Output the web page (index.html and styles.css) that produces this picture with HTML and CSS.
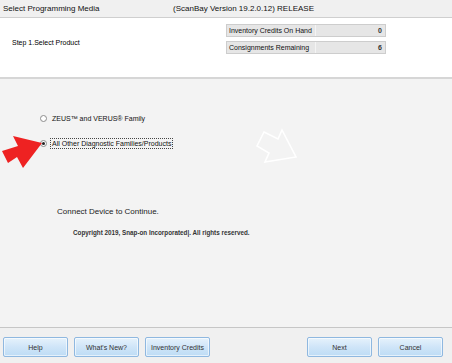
FILE: index.html
```html
<!DOCTYPE html>
<html>
<head>
<meta charset="utf-8">
<link rel="stylesheet" href="styles.css">
</head>
<body>
<div class="window">
  <div class="titlebar">
    <span class="title">Select Programming Media</span>
    <span class="version">(ScanBay Version 19.2.0.12) RELEASE</span>
  </div>
  <div class="header">
    <div class="step">Step 1.Select Product</div>
    <div class="stats">
      <div class="stat"><span class="stat-label">Inventory Credits On Hand</span><span class="stat-value">0</span></div>
      <div class="stat"><span class="stat-label">Consignments Remaining</span><span class="stat-value">6</span></div>
    </div>
  </div>
  <div class="main">
    <div class="radios">
      <label class="radio"><span class="dot"></span><span class="radio-text">ZEUS™ and VERUS® Family</span></label>
      <label class="radio"><span class="dot checked"></span><span class="radio-text focused">All Other Diagnostic Families/Products</span></label>
    </div>
    <div class="connect">Connect Device to Continue.</div>
    <div class="copyright">Copyright 2019, Snap-on Incorporated|. All rights reserved.</div>
    <svg class="overlay" width="452" height="250" viewBox="0 79 452 250">
      <polygon points="42,143 13,136 18,146 2,151 8,163 17,157 23,168" fill="#ee2222"/>
      <polygon points="264,132 278,139 282,130 296,157 265,162 269,153 257,146" fill="none" stroke="#ffffff" stroke-width="1.6" stroke-linejoin="miter"/>
    </svg>
  </div>
  <div class="footer">
    <div class="btn-group">
      <button class="btn">Help</button>
      <button class="btn">What's New?</button>
      <button class="btn">Inventory Credits</button>
    </div>
    <div class="btn-group">
      <button class="btn">Next</button>
      <button class="btn">Cancel</button>
    </div>
  </div>
</div>
</body>
</html>
```
FILE: styles.css
```css
* { box-sizing: border-box; }
html, body { margin: 0; padding: 0; }
body {
  width: 452px;
  height: 363px;
  overflow: hidden;
  font-family: "Liberation Sans", Arial, sans-serif;
  color: #1a1a1a;
  background: #f0f0f0;
}
.window {
  display: flex;
  flex-direction: column;
  width: 452px;
  height: 363px;
}
.titlebar {
  height: 18px;
  display: flex;
  align-items: center;
  background: #f0f0f0;
  border-bottom: 1px solid #cfcfcf;
  font-size: 8px;
  color: #111;
  padding-left: 3px;
}
.title { width: 170px; }
.header {
  height: 61px;
  background: #ffffff;
  border-bottom: 2px solid #d6d6d6;
  display: flex;
  padding-top: 6px;
}
.step {
  width: 226px;
  padding-left: 12px;
  padding-top: 15px;
  font-size: 7px;
  color: #000;
}
.stats {
  width: 160px;
  display: flex;
  flex-direction: column;
  gap: 4px;
}
.stat {
  height: 13px;
  display: flex;
  align-items: center;
  justify-content: space-between;
  background: #e6e6e6;
  border: 1px solid #cdcdcd;
  font-size: 7px;
  color: #111;
  white-space: nowrap;
}
.stat-label {
  width: 89px;
  height: 100%;
  display: flex;
  align-items: center;
  padding-left: 2px;
  border-right: 1px solid #f4f4f4;
  overflow: hidden;
}
.stat-value { padding-right: 3px; font-weight: bold; color: #333; }
.main {
  position: relative;
  height: 249px;
  background: #f3f3f3;
  border-bottom: 1px solid #c6c6c6;
  display: flex;
  flex-direction: column;
}
.radios {
  display: flex;
  flex-direction: column;
  gap: 13px;
  padding-left: 40px;
  padding-top: 33px;
}
.radio {
  display: flex;
  align-items: center;
  height: 12px;
  font-size: 7px;
  color: #111;
}
.dot {
  width: 7px;
  height: 7px;
  border-radius: 50%;
  background: #fff;
  border: 1px solid #8c8c8c;
  margin-right: 3px;
  position: relative;
}
.dot.checked::after {
  content: "";
  position: absolute;
  left: 1px;
  top: 1px;
  width: 3px;
  height: 3px;
  border-radius: 50%;
  background: #222;
}
.radio-text { padding: 1px 1px; border: 1px solid transparent; }
.radio-text.focused { border: 1px dotted #444; }
.connect {
  margin-top: 58px;
  padding-left: 57px;
  font-size: 8px;
  color: #222;
}
.copyright {
  margin-top: 13px;
  padding-left: 73px;
  font-size: 6.3px;
  font-weight: bold;
  color: #333;
}
.overlay {
  position: absolute;
  left: 0;
  top: 0;
  pointer-events: none;
}
.footer {
  flex: 1;
  background: #f0f0f0;
  display: flex;
  justify-content: space-between;
  padding: 9px 9px 0 3px;
}
.btn-group { display: flex; gap: 6px; }
.btn {
  width: 65px;
  height: 20px;
  border: 1px solid #8fb8e0;
  border-radius: 2px;
  background: linear-gradient(#e6f2fc, #cfe5f8 50%, #bedcf5);
  font-family: "Liberation Sans", Arial, sans-serif;
  font-size: 7px;
  color: #333;
  padding: 0;
  box-shadow: inset 0 0 0 1px rgba(255,255,255,0.6);
}
```
